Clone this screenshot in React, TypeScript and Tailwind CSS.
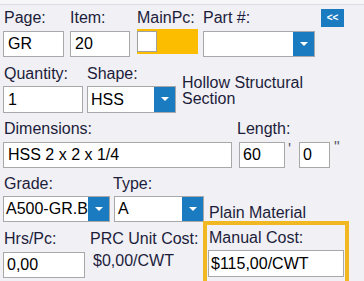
import React from "react";

const label = "h-[18px] leading-[18px] whitespace-nowrap text-[#1d1d3b]";
const box = "bg-white border border-[#a8a8a8] flex items-center text-black whitespace-nowrap overflow-hidden";

const Field = ({ value, className }: { value: string; className: string }) => (
  <div className={`${box} ${className}`}>{value}</div>
);

const Select = ({ value, className }: { value: string; className: string }) => (
  <div className={`${box} ${className}`}>
    <span className="flex-1 pl-[3px]">{value}</span>
    <span className="w-[21px] h-full bg-[#1b7bc1] flex items-center justify-center">
      <svg width="8" height="5" viewBox="0 0 8 5">
        <path d="M0 0 L8 0 L4 4 Z" fill="#ffffff" />
      </svg>
    </span>
  </div>
);

export default function App() {
  return (
    <div className="w-[364px] h-[281px] overflow-hidden bg-[#f0f0f5] font-['Liberation_Sans',Arial,sans-serif] text-[16px]">
      <div className="h-[5px] bg-[#f6f6f9] border-b border-[#dcdce4]" />

      {/* row 1 */}
      <div className="flex mt-[4px] pl-[3px]">
        <div className="w-[61px] flex flex-col">
          <div className={`${label} pl-[1px]`}>Page:</div>
          <Field value="GR" className="mt-[4px] h-[26px] pl-[4px]" />
        </div>
        <div className="ml-[6px] w-[60px] flex flex-col">
          <div className={label}>Item:</div>
          <Field value="20" className="mt-[4px] h-[26px] pl-[4px]" />
        </div>
        <div className="ml-[7px] w-[61px] flex flex-col">
          <div className={label}>MainPc:</div>
          <div className="mt-[2px] h-[25px] bg-[#fcbc00] pt-[2px]">
            <div className="w-[20px] h-[21px] bg-white border border-[#a0a0a0]" />
          </div>
        </div>
        <div className="ml-[5px] w-[112px] flex flex-col">
          <div className={label}>Part #:</div>
          <Select value="" className="mt-[4px] h-[26px]" />
        </div>
        <div className="ml-[6px] w-[23px] h-[18px] bg-[#1b7bc1] text-white text-[10px] font-bold flex items-center justify-center leading-none">
          &lt;&lt;
        </div>
      </div>

      {/* row 2 */}
      <div className="flex mt-[8px] pl-[3px]">
        <div className="w-[80px] flex flex-col">
          <div className={`${label} pl-[1px]`}>Quantity:</div>
          <Field value="1" className="mt-[3px] h-[27px] pl-[4px]" />
        </div>
        <div className="ml-[4px] w-[89px] flex flex-col">
          <div className={label}>Shape:</div>
          <Select value="HSS" className="mt-[3px] h-[27px]" />
        </div>
        <div className="ml-[6px] mt-[10px] w-[130px] leading-[16px] text-[#1d1d3b]">
          Hollow Structural Section
        </div>
      </div>

      {/* row 3 */}
      <div className="flex mt-[7px] pl-[3px]">
        <div className="w-[229px] flex flex-col">
          <div className={`${label} pl-[1px]`}>Dimensions:</div>
          <Field value="HSS 2 x 2 x 1/4" className="mt-[4px] h-[26px] pl-[4px]" />
        </div>
        <div className="ml-[7px] w-[46px] flex flex-col">
          <div className={`${label} -ml-[2px]`}>Length:</div>
          <Field value="60" className="mt-[4px] h-[26px] pl-[3px]" />
        </div>
        <div className="w-[14px] pl-[3px] mt-[21px] leading-[18px] text-[#5a5a70]">'</div>
        <div className="w-[31px] flex flex-col">
          <div className="h-[18px]" />
          <Field value="0" className="mt-[4px] h-[26px] pl-[3px]" />
        </div>
        <div className="pl-[4px] mt-[19px] leading-[18px] text-[#5a5a70]">"</div>
      </div>

      {/* row 4 */}
      <div className="flex mt-[7px] pl-[3px]">
        <div className="w-[107px] flex flex-col">
          <div className={`${label} pl-[1px]`}>Grade:</div>
          <Select value="A500-GR.B" className="mt-[3px] h-[26px] [&>span:first-child]:pl-[2px]" />
        </div>
        <div className="ml-[4px] w-[90px] flex flex-col">
          <div className={`${label} -ml-[1px]`}>Type:</div>
          <Select value="A" className="mt-[3px] h-[26px]" />
        </div>
        <div className={`${label} ml-[5px] mt-[29px]`}>Plain Material</div>
      </div>

      {/* row 5 */}
      <div className="flex -mt-[1px] pl-[3px]">
        <div className="w-[82px] flex flex-col pt-[9px]">
          <div className={`${label} pl-[1px]`}>Hrs/Pc:</div>
          <Field value="0,00" className="mt-[4px] h-[26px] pl-[3px]" />
        </div>
        <div className="ml-[5px] w-[113px] flex flex-col pt-[9px]">
          <div className={label}>PRC Unit Cost:</div>
          <div className={`${label} mt-[4px] pl-[3px]`}>$0,00/CWT</div>
        </div>
        <div className="w-[146px] h-[64px] border-[4px] border-[#f2b824] pt-[4px] pl-[2px] flex flex-col">
          <div className={label}>Manual Cost:</div>
          <Field value="$115,00/CWT" className="mt-[3px] -ml-[1px] w-[136px] h-[27px] pl-[2px]" />
        </div>
      </div>
    </div>
  );
}
